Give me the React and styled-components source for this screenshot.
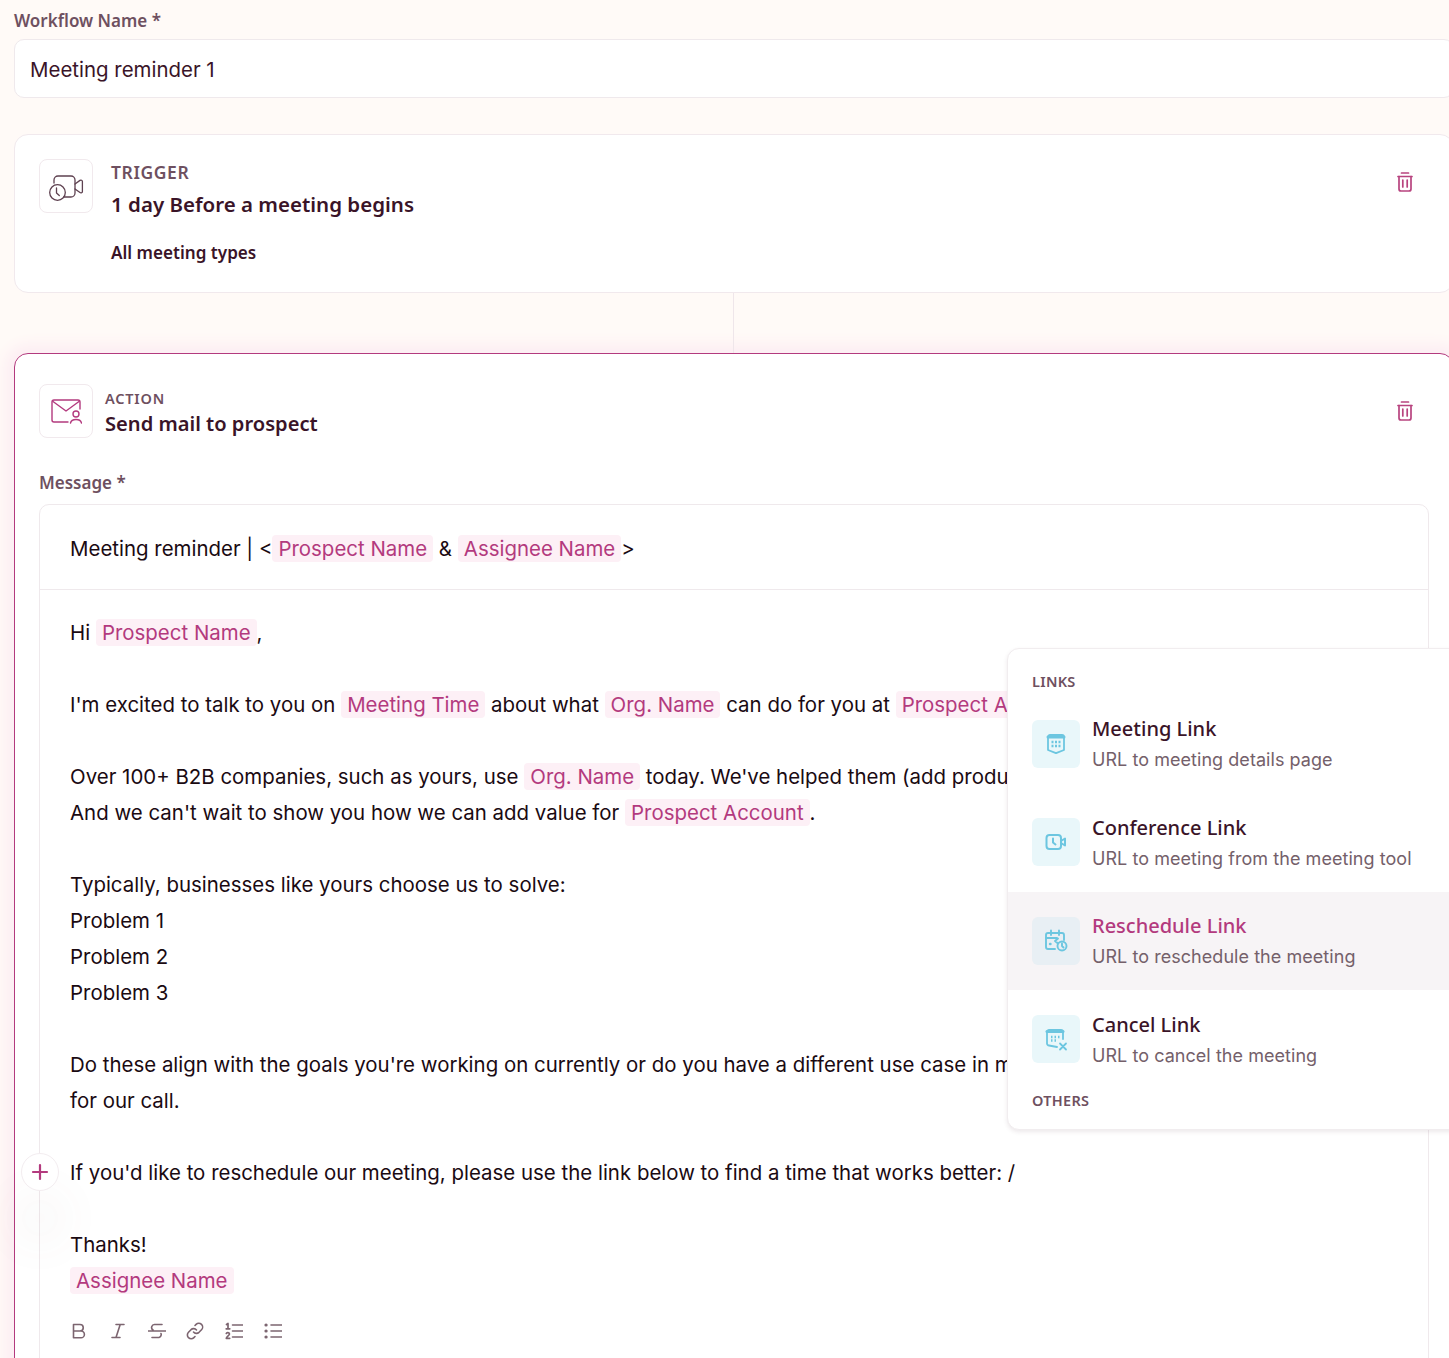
import React from 'react';
import styled, { createGlobalStyle } from 'styled-components';

const GlobalStyle = createGlobalStyle`
  html, body {
    margin: 0;
    padding: 0;
    background: #fffaf7;
  }
  * {
    box-sizing: border-box;
  }
`;

const heading = `"Noto Sans", "Liberation Sans", sans-serif`;
const body = `Inter, "Liberation Sans", sans-serif`;

const Page = styled.div`
  position: relative;
  width: 1449px;
  height: 1358px;
  overflow: hidden;
  padding-left: 14px;
  background: #fffaf7;
  font-family: ${body};
`;

const FieldLabel = styled.div`
  font-family: ${heading};
  font-weight: 600;
  font-size: 17px;
  line-height: 22px;
  color: #6e5060;
`;

const NameLabel = styled(FieldLabel)`
  padding-top: 10px;
  height: 39px;
`;

const NameInput = styled.div`
  width: 1440px;
  height: 59px;
  display: flex;
  align-items: center;
  padding: 1px 0 0 15px;
  background: #fff;
  border: 1px solid #efe9ec;
  border-radius: 10px;
  font-size: 20.45px;
  color: #3a1428;
`;

const Card = styled.div`
  width: 1440px;
  background: #fff;
  border-radius: 14px;
  border: 1px solid ${(p) => (p.$active ? '#b33a7e' : '#f1e9ed')};
  padding: ${(p) => (p.$active ? '30px 24px 0' : '24px 24px 0')};
  box-shadow: ${(p) => (p.$active ? '0 0 14px 9px #fdeef3' : 'none')};
`;

const TriggerCard = styled(Card)`
  margin-top: 36px;
  height: 159px;
`;

const ActionCard = styled(Card)`
  height: 1100px;
`;

const Connector = styled.div`
  width: 1px;
  height: 60px;
  margin-left: 719px;
  background: #efe6ea;
  position: relative;
  z-index: 1;
`;

const CardHead = styled.div`
  display: flex;
  align-items: flex-start;
  gap: ${(p) => p.$gap}px;
  padding-right: 16px;
`;

const IconBox = styled.div`
  flex: none;
  width: 54px;
  height: 54px;
  display: flex;
  align-items: center;
  justify-content: center;
  border: 1px solid #f1e9ed;
  border-radius: 8px;
  background: #fff;
`;

const HeadText = styled.div`
  flex: 1;
  padding-top: ${(p) => p.$top}px;
`;

const Overline = styled.div`
  font-family: ${heading};
  font-weight: 600;
  color: #6e5060;
  font-size: ${(p) => p.$size}px;
  line-height: 20px;
  letter-spacing: ${(p) => p.$spacing}px;
`;

const TriggerTitle = styled.div`
  font-family: ${heading};
  font-weight: 600;
  font-size: 20.5px;
  line-height: 30px;
  margin-top: 7px;
  color: #3a1428;
`;

const ActionTitle = styled(TriggerTitle)`
  font-size: 20.1px;
  margin-top: 2px;
  line-height: 28px;
`;

const SubTitle = styled.div`
  font-family: ${heading};
  font-weight: 600;
  font-size: 17.1px;
  line-height: 24px;
  margin-top: 22px;
  color: #3a1428;
`;

const TrashButton = styled.div`
  flex: none;
  margin-top: ${(p) => p.$top}px;
  color: #b8447f;
  display: flex;
`;

const MessageLabel = styled(FieldLabel)`
  margin-top: 34px;
  height: 32px;
`;

const Editor = styled.div`
  width: 1390px;
  border: 1px solid #efe9ec;
  border-radius: 10px;
  height: 900px;
`;

const SubjectRow = styled.div`
  height: 85px;
  display: flex;
  align-items: center;
  padding: 3px 0 0 30px;
  border-bottom: 1px solid #efe9ec;
`;

const EditorBody = styled.div`
  padding: 25.4px 0 0 30px;
`;

const Line = styled.div`
  height: 36px;
  line-height: 36px;
  font-size: 20.45px;
  color: #1a0a12;
  white-space: pre;
`;

const Chip = styled.span`
  display: inline-block;
  height: 27px;
  line-height: 27px;
  padding: 0 6px;
  background: #fdf0f6;
  color: #b33a7e;
  border-radius: 4px;
`;

const SignatureLine = styled(Line)`
  height: 38px;
`;

const Toolbar = styled.div`
  display: flex;
  align-items: center;
  gap: 20.8px;
  margin-top: 20.5px;
  color: #7c6570;
`;

const PlusButton = styled.div`
  position: absolute;
  left: 21px;
  top: 1153px;
  width: 38px;
  height: 38px;
  border-radius: 50%;
  background: #fff;
  border: 1px solid #f3edf0;
  display: flex;
  align-items: center;
  justify-content: center;
  color: #b33a7e;
  box-shadow: 0 46px 40px 14px rgba(120, 90, 100, 0.03);
`;

const Popover = styled.div`
  position: absolute;
  left: 1007px;
  top: 648px;
  width: 460px;
  height: 482px;
  background: #fff;
  border: 1px solid #f1edef;
  border-radius: 12px;
  box-shadow: 0 2px 4px rgba(80, 40, 60, 0.1);
  overflow: hidden;
`;

const PopoverHeading = styled.div`
  font-family: ${heading};
  font-weight: 600;
  font-size: 14.5px;
  letter-spacing: 0.3px;
  line-height: 18px;
  color: #6e5060;
  padding-left: 24px;
`;

const LinksHeading = styled(PopoverHeading)`
  padding-top: 23px;
  height: 45.5px;
`;

const OthersHeading = styled(PopoverHeading)`
  padding-top: 2px;
`;

const LinkRow = styled.div`
  height: 98.5px;
  display: flex;
  align-items: center;
  gap: 12px;
  padding-left: 24px;
  background: ${(p) => (p.$active ? '#f7f4f6' : 'transparent')};
`;

const LinkIcon = styled.div`
  flex: none;
  width: 48px;
  height: 48px;
  display: flex;
  align-items: center;
  justify-content: center;
  border-radius: 6px;
  background: rgba(108, 198, 224, ${(p) => (p.$active ? 0.1 : 0.15)});
  color: #6cc6e0;
`;

const LinkText = styled.div`
  padding-top: 1px;
`;

const LinkTitle = styled.div`
  font-family: ${heading};
  font-weight: 500;
  font-size: 20px;
  line-height: 28px;
  color: ${(p) => (p.$active ? '#b33a7e' : '#3a1428')};
`;

const LinkSub = styled.div`
  font-size: 18px;
  letter-spacing: 0.05px;
  line-height: 26px;
  margin-top: 4px;
  color: #74606a;
`;

const Svg = ({ size = 24, w, h, vb, sw = 1.6, children }) => (
  <svg
    width={w ?? size}
    height={h ?? size}
    viewBox={vb ?? `0 0 ${size} ${size}`}
    fill="none"
    stroke="currentColor"
    strokeWidth={sw}
    strokeLinecap="round"
    strokeLinejoin="round"
  >
    {children}
  </svg>
);

const TrashIcon = () => (
  <Svg w={16} h={20} vb="0 0 16 20" sw={1.7}>
    <path d="M4.5 1h7" />
    <path d="M1 4.500h14" />
    <path d="M2 4.500V17a2 2 0 0 0 2 2h8a2 2 0 0 0 2-2V4.500" />
    <path d="M5.800 8v7M10.200 8v7" />
  </Svg>
);

const VideoClockIcon = () => (
  <span style={{ color: '#5e4150', display: 'flex' }}>
    <Svg w={36} h={30} vb="0 0 36 30" sw={1.3}>
      <path d="M6 12V9a4 4 0 0 1 4-4h13a4 4 0 0 1 4 4v13a4 4 0 0 1-4 4h-7" />
      <path d="m27 13 5-3.600a1.500 1.500 0 0 1 2.400 1.200v9.800a1.500 1.500 0 0 1-2.400 1.200l-5-3.600" />
      <circle cx="9.500" cy="21.500" r="7.800" />
      <path d="M8.500 17v5l2.800 2.600" />
    </Svg>
  </span>
);

const MailUserIcon = () => (
  <span style={{ color: '#b33a7e', display: 'flex' }}>
    <Svg w={32} h={26} vb="0 0 32 26" sw={1.4}>
      <path d="M18 24H4a2 2 0 0 1-2-2V4a2 2 0 0 1 2-2h24a2 2 0 0 1 2 2v7" />
      <path d="m3 3.500 13 9.500 13-9.500" />
      <circle cx="26" cy="16" r="3" />
      <path d="M20.500 25c.5-2.500 2.500-3.500 5.500-3.500s5 1 5.500 3.500" />
    </Svg>
  </span>
);

const CalendarIcon = () => (
  <Svg size={20} sw={1.8}>
    <path d="M2 3a2 2 0 0 1 2-2h12a2 2 0 0 1 2 2v13l-8 3.200L2 16Z" />
    <path d="M2 3h16" strokeWidth={3} />
    <path d="M5.500 8h2M9 8h2M12.500 8h2M5.500 12h2M9 12h2M12.500 12h2" strokeWidth={2.400} strokeLinecap="butt" />
  </Svg>
);

const ConferenceIcon = () => (
  <Svg size={22} sw={2}>
    <rect x="1.500" y="4" width="14.500" height="14" rx="3" />
    <path d="m16 10 4-2.500v7L16 12" />
    <path d="M8 7.500V11.500l2.500 2" />
  </Svg>
);

const RescheduleIcon = () => (
  <Svg size={24} sw={1.9}>
    <path d="M11 20H4a2 2 0 0 1-2-2V6a2 2 0 0 1 2-2h14a2 2 0 0 1 2 2v5" />
    <path d="M7 1.500V6M15 1.500V6M2 9h11" />
    <path d="M6 15h.5" strokeWidth={2.400} />
    <path d="m14 9.500-3 2.500 3 2.500" />
    <circle cx="18" cy="17" r="4.500" />
    <path d="M18 14.500V17l1.500 1.500" />
  </Svg>
);

const CancelIcon = () => (
  <Svg size={24} sw={1.8}>
    <path d="M13 20 5 18.500a2 2 0 0 1-2-2V5a2 2 0 0 1 2-2h12a2 2 0 0 1 2 2v7" />
    <path d="M3 4.500h16" strokeWidth={3} />
    <path d="M7 10h1.500M10.500 10H12M14 10h1.500M7 13.500h1.500M10.500 13.500H12" strokeWidth={2.400} strokeLinecap="butt" />
    <path d="m16 16.500 6 6M22 16.500l-6 6" />
  </Svg>
);

const PlusIcon = () => (
  <Svg size={18} sw={2.2}>
    <path d="M9 2v14M2 9h14" />
  </Svg>
);

const BoldIcon = () => (
  <Svg size={18} sw={1.6}>
    <path d="M3.500 2.500h6.500a3.200 3.200 0 0 1 0 6.500H3.500ZM3.500 9h7.500a3.400 3.400 0 0 1 0 6.800H3.500Z" />
  </Svg>
);

const ItalicIcon = () => (
  <Svg size={18} sw={1.6}>
    <path d="M7 2.500h8M3 15.500h8M11.200 2.500 7 15.500" />
  </Svg>
);

const StrikeIcon = () => (
  <Svg size={18} sw={1.6}>
    <path d="M14 2.500H7a3 3 0 0 0-2 5.500M.5 9h17M13 11.500a3 3 0 0 1-2 4H4" />
  </Svg>
);

const LinkGlyph = () => (
  <Svg size={18} sw={1.6}>
    <path d="M7.500 10a3.800 3.800 0 0 0 5.500.3l2.500-2.500a3.800 3.800 0 0 0-5.400-5.400L9 3.500" />
    <path d="M10.500 8a3.800 3.800 0 0 0-5.500-.3l-2.500 2.500a3.800 3.800 0 0 0 5.400 5.400L9 14.500" />
  </Svg>
);

const OrderedIcon = () => (
  <Svg size={18} sw={1.6}>
    <path d="M7.500 3h10M7.500 9h10M7.500 15h10" />
    <path d="M1.500 2.500 3 1.500v5M1.200 6.800h3.600" strokeWidth={1.700} />
    <path d="M1.300 11.500c.3-1.300 3.200-1.300 3.200.5 0 1.300-3.200 2.500-3.200 4.300h3.400" strokeWidth={1.700} />
  </Svg>
);

const BulletIcon = () => (
  <Svg size={18} sw={1.6}>
    <path d="M7 3h10.500M7 9h10.500M7 15h10.500" />
    <path d="M2 3h.1M2 9h.1M2 15h.1" strokeWidth={3.200} />
  </Svg>
);

const links = [
  { title: 'Meeting Link', sub: 'URL to meeting details page', Icon: CalendarIcon },
  { title: 'Conference Link', sub: 'URL to meeting from the meeting tool', Icon: ConferenceIcon },
  { title: 'Reschedule Link', sub: 'URL to reschedule the meeting', Icon: RescheduleIcon, active: true },
  { title: 'Cancel Link', sub: 'URL to cancel the meeting', Icon: CancelIcon },
];

const toolbarIcons = [BoldIcon, ItalicIcon, StrikeIcon, LinkGlyph, OrderedIcon, BulletIcon];

export default function App() {
  return (
    <Page>
      <GlobalStyle />
      <NameLabel>Workflow Name *</NameLabel>
      <NameInput>Meeting reminder 1</NameInput>

      <TriggerCard>
        <CardHead $gap={18}>
          <IconBox>
            <VideoClockIcon />
          </IconBox>
          <HeadText $top={3}>
            <Overline $size={17.500} $spacing={0.600}>TRIGGER</Overline>
            <TriggerTitle>1 day Before a meeting begins</TriggerTitle>
            <SubTitle>All meeting types</SubTitle>
          </HeadText>
          <TrashButton $top={13}>
            <TrashIcon />
          </TrashButton>
        </CardHead>
      </TriggerCard>

      <Connector />

      <ActionCard $active>
        <CardHead $gap={12}>
          <IconBox>
            <MailUserIcon />
          </IconBox>
          <HeadText $top={4}>
            <Overline $size={14.500} $spacing={0.800}>ACTION</Overline>
            <ActionTitle>Send mail to prospect</ActionTitle>
          </HeadText>
          <TrashButton $top={17}>
            <TrashIcon />
          </TrashButton>
        </CardHead>

        <MessageLabel>Message *</MessageLabel>
        <Editor>
          <SubjectRow>
            <Line>
              Meeting reminder | &lt;<Chip>Prospect Name</Chip> &amp; <Chip>Assignee Name</Chip>&gt;
            </Line>
          </SubjectRow>
          <EditorBody>
            <Line>Hi <Chip>Prospect Name</Chip>,</Line>
            <Line> </Line>
            <Line>
              I'm excited to talk to you on <Chip>Meeting Time</Chip> about what <Chip>Org. Name</Chip> can do for you at <Chip>Prospect Account</Chip>.
            </Line>
            <Line> </Line>
            <Line>
              Over 100+ B2B companies, such as yours, use <Chip>Org. Name</Chip> today. We've helped them (add product value here).
            </Line>
            <Line>
              And we can't wait to show you how we can add value for <Chip>Prospect Account</Chip>.
            </Line>
            <Line> </Line>
            <Line>Typically, businesses like yours choose us to solve:</Line>
            <Line>Problem 1</Line>
            <Line>Problem 2</Line>
            <Line>Problem 3</Line>
            <Line> </Line>
            <Line>Do these align with the goals you're working on currently or do you have a different use case in mind? Let me know</Line>
            <Line>for our call.</Line>
            <Line> </Line>
            <Line>If you'd like to reschedule our meeting, please use the link below to find a time that works better: /</Line>
            <Line> </Line>
            <Line>Thanks!</Line>
            <SignatureLine><Chip>Assignee Name</Chip></SignatureLine>
            <Toolbar>
              {toolbarIcons.map((Icon, i) => (
                <Icon key={i} />
              ))}
            </Toolbar>
          </EditorBody>
        </Editor>
      </ActionCard>

      <PlusButton>
        <PlusIcon />
      </PlusButton>

      <Popover>
        <LinksHeading>LINKS</LinksHeading>
        {links.map(({ title, sub, Icon, active }) => (
          <LinkRow key={title} $active={active}>
            <LinkIcon $active={active}>
              <Icon />
            </LinkIcon>
            <LinkText>
              <LinkTitle $active={active}>{title}</LinkTitle>
              <LinkSub>{sub}</LinkSub>
            </LinkText>
          </LinkRow>
        ))}
        <OthersHeading>OTHERS</OthersHeading>
      </Popover>
    </Page>
  );
}
